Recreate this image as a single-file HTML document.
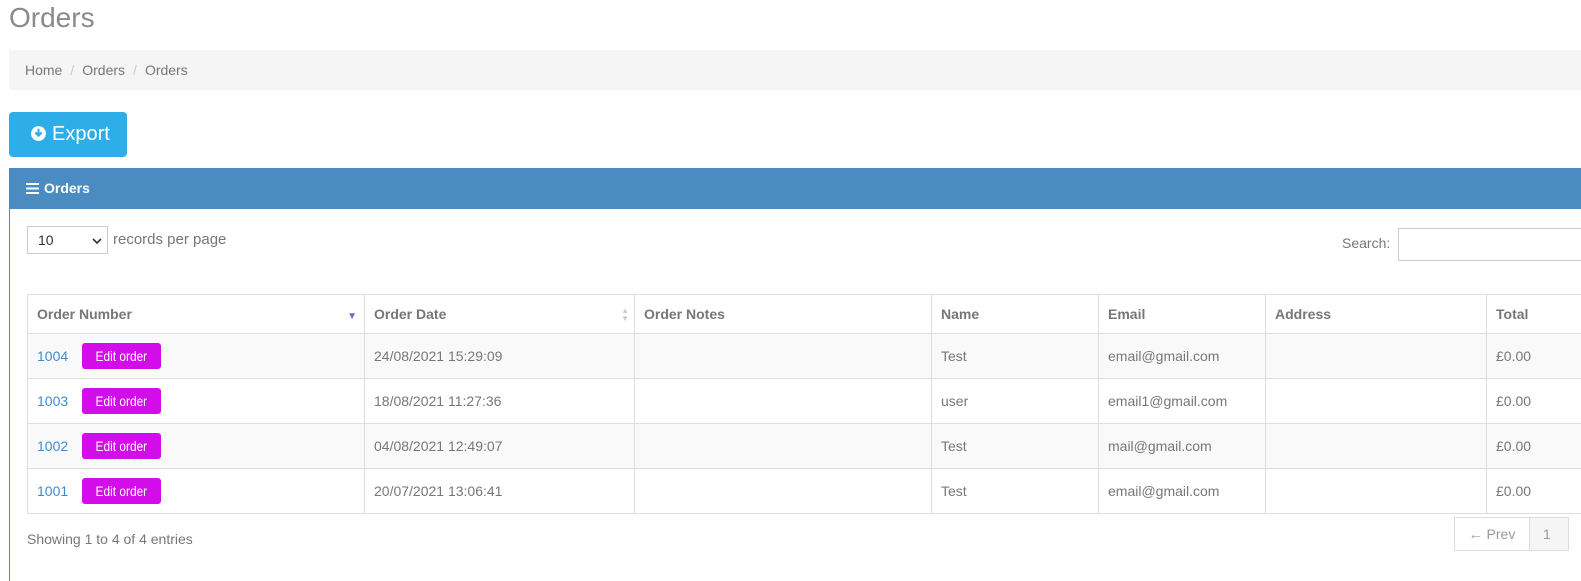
<!DOCTYPE html>
<html><head><meta charset="utf-8"><style>
*{box-sizing:border-box;margin:0;padding:0}
body{width:1581px;height:581px;overflow:hidden;background:#fff;font-family:"Liberation Sans",sans-serif;color:#777;font-size:14px;position:relative}
.a{position:absolute}
h1{position:absolute;left:9px;top:2px;font-weight:300;font-size:28px;color:#8a8a8a}
.bc{left:9px;top:50px;width:1572px;height:40px;background:#f5f5f5;padding:12px 16px;font-size:14px;color:#777}
.bc span{color:#ccc;margin:0 8px}
.btn{left:9px;top:112px;width:118px;height:45px;background:#2eaee8;border-radius:4px;color:#fff;font-size:20px;line-height:45px;padding-left:21px}
.ph{left:9px;top:168px;width:1572px;height:41px;background:#4a8bc2;color:#fff;font-weight:bold;font-size:14px;line-height:41px;padding-left:17px}
.pl{left:9px;top:209px;width:1px;height:372px;background:#4a8bc2}
table{position:absolute;left:27px;top:294px;border-collapse:collapse;width:1570px}
td,th{border:1px solid #ddd;text-align:left;padding:0 9px;height:45px;vertical-align:middle;font-size:14px}
th{height:39px;font-weight:bold;color:#777;position:relative}
tr.o td{background:#f9f9f9}
a{color:#428bca;text-decoration:none}
.eb{display:inline-block;background:#d30cea;color:#fff;font-size:14px;border-radius:3px;height:26px;line-height:26px;width:79px;text-align:center;margin-left:14px}
.eb i{font-style:normal;display:inline-block;transform:scaleX(.85)}
</style></head><body>
<h1>Orders</h1>
<div class="a bc">Home<span>/</span>Orders<span>/</span>Orders</div>
<div class="a btn"><svg width="17" height="17" viewBox="0 0 16 16" style="vertical-align:-2px;margin-right:5px"><circle cx="8" cy="8" r="7" fill="#fff"/><path d="M8 3.5v6M5 7l3 3 3-3" stroke="#2eaee8" stroke-width="2" fill="none"/></svg>Export</div>
<div class="a ph"><svg width="13" height="11" style="vertical-align:-1px;margin-right:5px"><rect y="0" width="13" height="2" fill="#fff"/><rect y="4.5" width="13" height="2" fill="#fff"/><rect y="9" width="13" height="2" fill="#fff"/></svg>Orders</div>
<div class="a pl"></div>
<div class="a" style="left:27px;top:226px;width:81px;height:28px;border:1px solid #ccc;padding:5px 10px;color:#333">10<svg class="a" style="left:64px;top:11px" width="10" height="6"><path d="M1 1l4 4 4-4" stroke="#333" stroke-width="1.6" fill="none"/></svg></div>
<div class="a" style="left:113px;top:231px;font-size:15px">records per page</div>
<div class="a" style="left:1342px;top:235px;font-size:14px">Search:</div>
<div class="a" style="left:1398px;top:228px;width:190px;height:33px;border:1px solid #ccc"></div>
<table>
<tr><th style="width:337px">Order Number<span class="a" style="right:7px;top:16px;font-size:10px;color:#6b6bd6">▼</span></th><th style="width:270px">Order Date<span class="a" style="right:5px;top:12px;font-size:8px;color:#ccc;line-height:8px">▲<br>▼</span></th><th style="width:297px">Order Notes</th><th style="width:167px">Name</th><th style="width:167px">Email</th><th style="width:221px">Address</th><th>Total</th></tr>
<tr class="o"><td><a>1004</a><span class="eb"><i>Edit order</i></span></td><td>24/08/2021 15:29:09</td><td></td><td>Test</td><td>email@gmail.com</td><td></td><td>£0.00</td></tr>
<tr><td><a>1003</a><span class="eb"><i>Edit order</i></span></td><td>18/08/2021 11:27:36</td><td></td><td>user</td><td>email1@gmail.com</td><td></td><td>£0.00</td></tr>
<tr class="o"><td><a>1002</a><span class="eb"><i>Edit order</i></span></td><td>04/08/2021 12:49:07</td><td></td><td>Test</td><td>mail@gmail.com</td><td></td><td>£0.00</td></tr>
<tr><td><a>1001</a><span class="eb"><i>Edit order</i></span></td><td>20/07/2021 13:06:41</td><td></td><td>Test</td><td>email@gmail.com</td><td></td><td>£0.00</td></tr>
</table>
<div class="a" style="left:27px;top:531px;font-size:14px">Showing 1 to 4 of 4 entries</div>
<div class="a" style="left:1454px;top:517px;width:76px;height:34px;border:1px solid #ddd;line-height:32px;text-align:center;color:#999">← Prev</div>
<div class="a" style="left:1529px;top:517px;width:40px;height:34px;border:1px solid #ddd;background:#f5f5f5;line-height:32px;padding-left:13px;color:#999">1</div>
</body></html>
